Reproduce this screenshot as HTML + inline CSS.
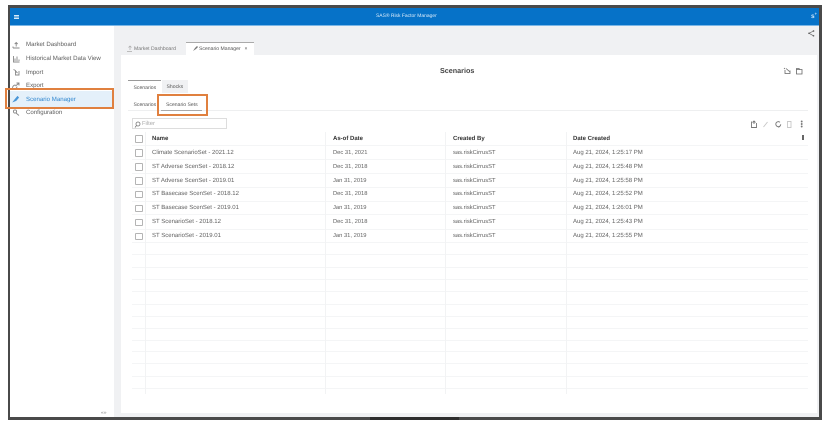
<!DOCTYPE html>
<html><head><meta charset="utf-8">
<style>
html,body{margin:0;padding:0;background:#fff}
#p{position:relative;width:826px;height:421px;overflow:hidden;background:#fff;font-family:"Liberation Sans",sans-serif;color:#666;text-rendering:geometricPrecision}
#p div{position:absolute}
.t{white-space:nowrap;line-height:10px;filter:blur(.3px)}
.nav{font-size:6.1px;color:#5c5c5c;left:26px}
.tb{font-size:5.1px;color:#555}
.cell{font-size:6px;color:#626262}
.cd{font-size:5.8px;color:#626262}
.hd{font-size:6px;color:#333;font-weight:bold}
.hl{left:132px;width:676px;height:1px;background:#f4f5f6}
.vl{top:132px;width:1px;height:262px;background:#f2f3f4}
.cb{left:135px;width:5.500px;height:5.500px;border:1px solid #b4b4b4;background:#fff;border-radius:1px;filter:blur(.25px)}
svg{position:absolute;overflow:visible;filter:blur(.35px)}
</style></head><body>
<div id="p">
<!-- frame -->
<div style="left:8px;top:5px;width:813.500px;height:415px;background:#4a4a4a"></div>
<div style="left:10px;top:8px;width:809px;height:409px;background:#fff"></div>
<!-- top bar -->
<div style="left:10px;top:8px;width:809px;height:17px;background:#0672c8"></div>
<div style="left:10px;top:25px;width:809px;height:1px;background:#7ab6e6"></div>
<div style="left:14px;top:15px;width:5px;height:1px;background:#d5e9f9;box-shadow:0 1.500px 0 #d5e9f9,0 3px 0 #d5e9f9"></div>
<div class="t" style="left:376px;top:12px;font-size:4.950px;color:#dcecfa">SAS® Risk Factor Manager</div>
<div class="t" style="left:811px;top:12px;font-size:6.500px;color:#d5e9f9;font-weight:bold">s<sup style="font-size:4px;line-height:0">+</sup></div>
<!-- content background -->
<div style="left:114px;top:26px;width:705px;height:391px;background:#f0f1f3"></div>
<div style="left:121px;top:55px;width:696px;height:358px;background:#fff"></div>
<!-- sidebar -->
<div style="left:10px;top:91px;width:104px;height:17px;background:#e4f0fa"></div>
<svg style="left:12px;top:40px" width="14" height="80" fill="none" stroke="#888" stroke-width=".9">
<path d="M1 8h6.500M1 6.500V8M4.200 2.500v4M2.700 4l1.500-1.500L5.700 4"/>
<path d="M1.500 16v6h6M3 21v-2.500M5 21v-4.500M7 21v-1.500"/>
<path d="M1.500 29.500l2 1v4.500h3.500v-4M5.500 33l-2-2"/>
<path d="M.5 48a3 3 0 0 1 3-3M3 48.500a2 2 0 0 0 2-2M3.500 46l3-2.500M4.500 43h2.500v2.500"/>
<path d="M1.500 61.500l1.500-2 2.500-3 1 1-2.500 3z" stroke="#4a97d8" fill="#4a97d8"/>
<circle cx="3" cy="71.500" r="1.600"/><path d="M4 73l3 2.500"/>
</svg>
<div class="t nav" style="top:40px">Market Dashboard</div>
<div class="t nav" style="top:53.500px">Historical Market Data View</div>
<div class="t nav" style="top:67.500px">Import</div>
<div class="t nav" style="top:80.500px">Export</div>
<div class="t nav" style="top:94.500px;color:#2f86cf">Scenario Manager</div>
<div class="t nav" style="top:108px">Configuration</div>
<div class="t" style="left:101px;top:408px;font-size:5px;color:#777">«»</div>
<!-- tabs -->
<div style="left:186px;top:42px;width:68px;height:13px;background:#fff;border-top:1px solid #aaa;box-sizing:border-box"></div>
<svg style="left:127px;top:45px" width="8" height="8" fill="none" stroke="#aaa" stroke-width=".7"><path d="M0 6.500h5M3 1v4M1.500 2.500L3 1l1.500 1.500"/></svg>
<div class="t tb" style="left:134px;top:43.500px;color:#777">Market Dashboard</div>
<svg style="left:192px;top:45px" width="7" height="7"><path d="M1 6l2-3 2-2 1 1-2 2z" fill="#777"/></svg>
<div class="t tb" style="left:199px;top:43.500px">Scenario Manager</div>
<div class="t tb" style="left:244.500px;top:43.500px">×</div>
<svg style="left:808px;top:30px" width="7" height="7" fill="none" stroke="#666" stroke-width=".7"><path d="M5.500 1L1 3.300l4.500 2.500"/><circle cx="5.500" cy="1" r=".5" fill="#666"/><circle cx="1" cy="3.300" r=".5" fill="#666"/><circle cx="5.500" cy="5.800" r=".5" fill="#666"/></svg>
<!-- title -->
<div class="t" style="left:440px;top:65.700px;font-size:7.200px;font-weight:bold;color:#444">Scenarios</div>
<svg style="left:783px;top:67px" width="22" height="9" fill="none" stroke="#666" stroke-width=".8"><path d="M1 1l1 1M2 3v3.500h5V3.500M3 1.500l3.500 3"/><path d="M13.500 2.500h5.500v4.500h-5.500z"/><path d="M13.500 2.500V1.500h2.500l.8 1"/></svg>
<!-- subtabs -->
<div style="left:128px;top:80px;width:33px;height:1px;background:#999"></div>
<div style="left:162px;top:80px;width:26px;height:13px;background:#f0f1f3"></div>
<div class="t tb" style="left:133.500px;top:82.500px">Scenarios</div>
<div class="t tb" style="left:166.500px;top:82px">Shocks</div>
<div style="left:128px;top:110px;width:680px;height:1px;background:#eeeff0"></div>
<div class="t tb" style="left:133.500px;top:99.500px">Scenarios</div>
<div class="t tb" style="left:166px;top:99.500px">Scenario Sets</div>
<div style="left:161px;top:110px;width:41px;height:1px;background:#aaa"></div>
<!-- filter -->
<div style="left:132px;top:118px;width:95px;height:11px;border:1px solid #ddd;background:#fff;box-sizing:border-box"></div>
<svg style="left:134px;top:120.500px" width="7" height="7" fill="none" stroke="#777" stroke-width=".8"><circle cx="4" cy="3" r="2"/><path d="M2.500 4.500L1 6.500"/></svg>
<div class="t" style="left:142px;top:119px;font-size:5.800px;color:#aaa">Filter</div>
<!-- toolbar -->
<svg style="left:750px;top:119.500px" width="58" height="9" fill="none" stroke="#777" stroke-width=".9"><path d="M1.500 1.500v6h5V3M4 4V1M2.500 2.500L4 1l1.500 1.500"/><path d="M13.500 7l4-5" stroke="#c5c5c5"/><path d="M30 2.300a2.500 2.500 0 1 0 .8 2M28 7a2.500 2.500 0 0 0 2.500-2" stroke="#777"/><path d="M37.500 1.500h3.500v6h-3.500z" stroke="#c8c8c8"/><circle cx="51.700" cy="1.500" r=".5" fill="#666"/><circle cx="51.700" cy="4" r=".5" fill="#666"/><circle cx="51.700" cy="6.500" r=".5" fill="#666"/></svg>
<div style="left:802px;top:135px;width:1.500px;height:5px;background:#666;filter:blur(.3px)"></div>
<!-- table lines -->
<div class="hl" style="top:144.500px"></div><div class="hl" style="top:159px"></div><div class="hl" style="top:173px"></div><div class="hl" style="top:187px"></div><div class="hl" style="top:200.500px"></div><div class="hl" style="top:214px"></div><div class="hl" style="top:228.500px"></div><div class="hl" style="top:242px"></div><div class="hl" style="top:254px"></div><div class="hl" style="top:267px"></div><div class="hl" style="top:279px"></div><div class="hl" style="top:291px"></div><div class="hl" style="top:304px"></div><div class="hl" style="top:316px"></div><div class="hl" style="top:328px"></div><div class="hl" style="top:340px"></div><div class="hl" style="top:351px"></div><div class="hl" style="top:363px"></div><div class="hl" style="top:376px"></div><div class="hl" style="top:388px"></div>
<div class="vl" style="left:145px"></div><div class="vl" style="left:325px"></div><div class="vl" style="left:445px"></div><div class="vl" style="left:566px"></div>
<!-- headers -->
<div class="cb" style="top:135px"></div>
<div class="t hd" style="left:152px;top:134px">Name</div>
<div class="t hd" style="left:333px;top:134px">As-of Date</div>
<div class="t hd" style="left:453px;top:134px">Created By</div>
<div class="t hd" style="left:573px;top:134px">Date Created</div>
<!-- rows -->
<div class="cb" style="top:149px"></div><div class="t cell" style="left:152px;top:147.500px">Climate ScenarioSet - 2021.12</div><div class="t cd" style="left:333px;top:147.500px">Dec 31, 2021</div><div class="t cd" style="left:453px;top:147.500px">sas.riskCirrusST</div><div class="t cell" style="left:573px;top:147.500px">Aug 21, 2024, 1:25:17 PM</div>
<div class="cb" style="top:163px"></div><div class="t cell" style="left:152px;top:161.500px">ST Adverse ScenSet - 2018.12</div><div class="t cd" style="left:333px;top:161.500px">Dec 31, 2018</div><div class="t cd" style="left:453px;top:161.500px">sas.riskCirrusST</div><div class="t cell" style="left:573px;top:161.500px">Aug 21, 2024, 1:25:48 PM</div>
<div class="cb" style="top:177px"></div><div class="t cell" style="left:152px;top:175.500px">ST Adverse ScenSet - 2019.01</div><div class="t cd" style="left:333px;top:175.500px">Jan 31, 2019</div><div class="t cd" style="left:453px;top:175.500px">sas.riskCirrusST</div><div class="t cell" style="left:573px;top:175.500px">Aug 21, 2024, 1:25:58 PM</div>
<div class="cb" style="top:190.500px"></div><div class="t cell" style="left:152px;top:189px">ST Basecase ScenSet - 2018.12</div><div class="t cd" style="left:333px;top:189px">Dec 31, 2018</div><div class="t cd" style="left:453px;top:189px">sas.riskCirrusST</div><div class="t cell" style="left:573px;top:189px">Aug 21, 2024, 1:25:52 PM</div>
<div class="cb" style="top:204.500px"></div><div class="t cell" style="left:152px;top:203px">ST Basecase ScenSet - 2019.01</div><div class="t cd" style="left:333px;top:203px">Jan 31, 2019</div><div class="t cd" style="left:453px;top:203px">sas.riskCirrusST</div><div class="t cell" style="left:573px;top:203px">Aug 21, 2024, 1:26:01 PM</div>
<div class="cb" style="top:218.500px"></div><div class="t cell" style="left:152px;top:217px">ST ScenarioSet - 2018.12</div><div class="t cd" style="left:333px;top:217px">Dec 31, 2018</div><div class="t cd" style="left:453px;top:217px">sas.riskCirrusST</div><div class="t cell" style="left:573px;top:217px">Aug 21, 2024, 1:25:43 PM</div>
<div class="cb" style="top:232.500px"></div><div class="t cell" style="left:152px;top:231px">ST ScenarioSet - 2019.01</div><div class="t cd" style="left:333px;top:231px">Jan 31, 2019</div><div class="t cd" style="left:453px;top:231px">sas.riskCirrusST</div><div class="t cell" style="left:573px;top:231px">Aug 21, 2024, 1:25:55 PM</div>
<!-- highlights -->
<div style="left:5px;top:88px;width:109px;height:21px;border:2px solid #e0803f;box-sizing:border-box"></div>
<div style="left:157px;top:94px;width:51px;height:22px;border:2px solid #e0803f;box-sizing:border-box"></div>
<!-- bottom scrollbar -->
<div style="left:370px;top:417px;width:89px;height:3px;background:#2e2e2e"></div>
</div>
</body></html>
